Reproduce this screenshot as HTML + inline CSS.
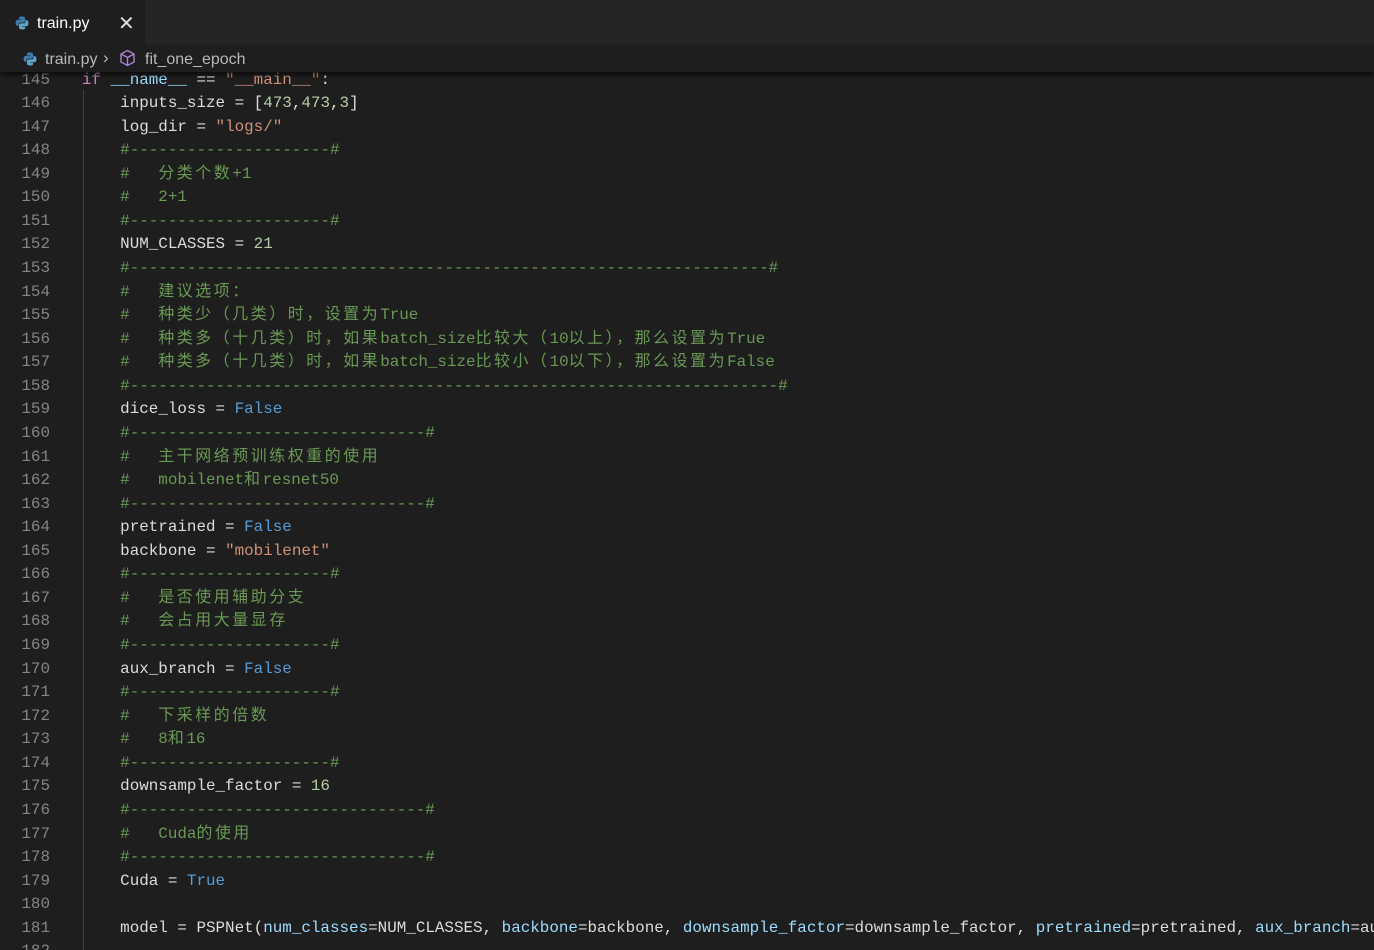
<!DOCTYPE html>
<html style="width:1374px;height:950px;overflow:hidden"><head><meta charset="utf-8"><style>
body{margin:0;width:1374px;height:950px;background:#1e1e1e;overflow:hidden;position:relative;font-family:"Liberation Mono","Noto Sans CJK SC",monospace;}
.tabs{position:absolute;left:0;top:0;width:1374px;height:45px;background:#252526;}
.tab{position:absolute;left:0;top:0;width:145px;height:45px;background:#1e1e1e;font-family:"Liberation Sans",sans-serif;font-size:16px;color:#fff;}
.bc{position:absolute;left:0;top:45px;width:1374px;height:27px;background:#1e1e1e;box-shadow:0 3px 4px rgba(0,0,0,.6);z-index:2;font-family:"Liberation Sans",sans-serif;font-size:16px;color:#b8b8b8;}
.ln{position:absolute;left:0;width:50px;text-align:right;color:#858585;font-size:15.9px;line-height:23.57px;white-space:pre;}
.cd{position:absolute;left:82px;width:1292px;overflow:hidden;color:#dcdcdc;font-size:15.9px;line-height:23.57px;white-space:pre;}
.c{letter-spacing:2.6px}
.cm{color:#6a9955}.k{color:#c586c0}.v{color:#dcdcdc}.p{color:#9cdcfe}.s{color:#ce9178}.n{color:#b5cea8}.b{color:#569cd6}.f{color:#dcdcdc}
.guide{position:absolute;left:83px;top:90px;width:1px;height:860px;background:#404040;}
</style></head><body>
<div class="tabs"><div class="tab">
<svg style="position:absolute;left:15px;top:16px" width="14" height="14" viewBox="0 0 14 14"><path d="M6.8 0.5c-3 0-2.9 1.3-2.9 1.3v1.4h3v.5H2.7S.6 3.5.6 6.8s1.8 3.1 1.8 3.1h1.1V8.4s-.1-1.8 1.8-1.8h3s1.7 0 1.7-1.7V2.2S10.2.5 6.8.5z" fill="#3f7cac"/><path d="M7.2 13.5c3 0 2.9-1.3 2.9-1.3v-1.4h-3v-.5h4.2s2.1.2 2.1-3.1-1.8-3.1-1.8-3.1h-1.1v1.5s.1 1.8-1.8 1.8h-3s-1.7 0-1.7 1.7v2.7s-.3 1.7 3.2 1.7z" fill="#5ea4c9"/></svg>
<span style="position:absolute;left:37px;top:15px">train.py</span>
<span style="position:absolute;left:118px;top:11px;font-size:20px;color:#ddd">✕</span></div></div>
<div class="bc">
<svg style="position:absolute;left:23px;top:7px" width="14" height="14" viewBox="0 0 14 14"><path d="M6.8 0.5c-3 0-2.9 1.3-2.9 1.3v1.4h3v.5H2.7S.6 3.5.6 6.8s1.8 3.1 1.8 3.1h1.1V8.4s-.1-1.8 1.8-1.8h3s1.7 0 1.7-1.7V2.2S10.2.5 6.8.5z" fill="#3f7cac"/><path d="M7.2 13.5c3 0 2.9-1.3 2.9-1.3v-1.4h-3v-.5h4.2s2.1.2 2.1-3.1-1.8-3.1-1.8-3.1h-1.1v1.5s.1 1.8-1.8 1.8h-3s-1.7 0-1.7 1.7v2.7s-.3 1.7 3.2 1.7z" fill="#5ea4c9"/></svg>
<span style="position:absolute;left:45px;top:6px">train.py</span>
<span style="position:absolute;left:103px;top:3px;font-size:17px">›</span>
<svg style="position:absolute;left:119px;top:4px" width="17" height="18" viewBox="0 0 17 18"><path d="M8.5 1.5 15 5v8l-6.5 3.5L2 13V5zM2 5l6.5 3.5L15 5M8.5 8.5v8" fill="none" stroke="#b180d7" stroke-width="1.4"/></svg>
<span style="position:absolute;left:145px;top:6px">fit_one_epoch</span>
</div>
<div class="guide"></div>
<div class="ln" style="top:68.5px">145
146
147
148
149
150
151
152
153
154
155
156
157
158
159
160
161
162
163
164
165
166
167
168
169
170
171
172
173
174
175
176
177
178
179
180
181
182</div>
<div class="cd" style="top:68.5px"><span class="k">if</span> <span class="p">__name__</span> == <span class="s">"__main__"</span>:
    <span class="v">inputs_size</span> = [<span class="n">473</span>,<span class="n">473</span>,<span class="n">3</span>]
    <span class="v">log_dir</span> = <span class="s">"logs/"</span>
    <span class="cm">#---------------------#</span>
    <span class="cm">#   <span class="c">分类个数</span>+1</span>
    <span class="cm">#   2+1</span>
    <span class="cm">#---------------------#</span>
    <span class="v">NUM_CLASSES</span> = <span class="n">21</span>
    <span class="cm">#-------------------------------------------------------------------#</span>
    <span class="cm">#   <span class="c">建议选项：</span></span>
    <span class="cm">#   <span class="c">种类少（几类）时，设置为</span>True</span>
    <span class="cm">#   <span class="c">种类多（十几类）时，如果</span>batch_size<span class="c">比较大（</span>10<span class="c">以上），那么设置为</span>True</span>
    <span class="cm">#   <span class="c">种类多（十几类）时，如果</span>batch_size<span class="c">比较小（</span>10<span class="c">以下），那么设置为</span>False</span>
    <span class="cm">#--------------------------------------------------------------------#</span>
    <span class="v">dice_loss</span> = <span class="b">False</span>
    <span class="cm">#-------------------------------#</span>
    <span class="cm">#   <span class="c">主干网络预训练权重的使用</span></span>
    <span class="cm">#   mobilenet<span class="c">和</span>resnet50</span>
    <span class="cm">#-------------------------------#</span>
    <span class="v">pretrained</span> = <span class="b">False</span>
    <span class="v">backbone</span> = <span class="s">"mobilenet"</span>
    <span class="cm">#---------------------#</span>
    <span class="cm">#   <span class="c">是否使用辅助分支</span></span>
    <span class="cm">#   <span class="c">会占用大量显存</span></span>
    <span class="cm">#---------------------#</span>
    <span class="v">aux_branch</span> = <span class="b">False</span>
    <span class="cm">#---------------------#</span>
    <span class="cm">#   <span class="c">下采样的倍数</span></span>
    <span class="cm">#   8<span class="c">和</span>16</span>
    <span class="cm">#---------------------#</span>
    <span class="v">downsample_factor</span> = <span class="n">16</span>
    <span class="cm">#-------------------------------#</span>
    <span class="cm">#   Cuda<span class="c">的使用</span></span>
    <span class="cm">#-------------------------------#</span>
    <span class="v">Cuda</span> = <span class="b">True</span>

    <span class="v">model</span> = <span class="f">PSPNet</span>(<span class="p">num_classes</span>=<span class="v">NUM_CLASSES</span>, <span class="p">backbone</span>=<span class="v">backbone</span>, <span class="p">downsample_factor</span>=<span class="v">downsample_factor</span>, <span class="p">pretrained</span>=<span class="v">pretrained</span>, <span class="p">aux_branch</span>=<span class="v">aux_branch</span>)</div>
</body></html>
